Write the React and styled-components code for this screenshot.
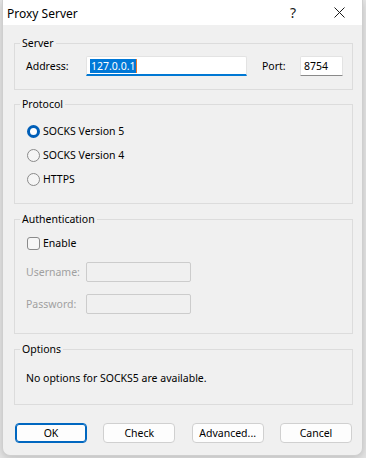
import React from 'react';
import styled, { createGlobalStyle } from 'styled-components';

const GlobalStyle = createGlobalStyle`
  html, body {
    margin: 0;
    padding: 0;
    background: #e6e6e6;
  }
  body {
    font-family: "Segoe UI", "Noto Sans", "Liberation Sans", sans-serif;
    font-size: 10.5px;
    color: #000;
  }
`;

const Page = styled.div`
  width: 366px;
  height: 458px;
  overflow: hidden;
  padding-left: 2px;
  box-sizing: border-box;
`;

const Window = styled.div`
  width: 361px;
  height: 456px;
  box-sizing: border-box;
  background: #f0f0f0;
  border: 1px solid #cfcfcf;
  border-top: none;
  border-radius: 0 0 8px 8px;
  box-shadow: 0 2px 8px rgba(0, 0, 0, 0.18);
  display: flex;
  flex-direction: column;
  overflow: hidden;
`;

const TitleBar = styled.div`
  height: 25px;
  background: #fff;
  display: flex;
  align-items: center;
  padding-left: 4px;
  flex-shrink: 0;
`;

const Title = styled.div`
  flex: 1;
  font-size: 12px;
  padding-top: 1px;
`;

const TitleButton = styled.div`
  width: 46px;
  height: 25px;
  display: flex;
  align-items: center;
  justify-content: center;
  font-size: 14px;
  color: #1a1a1a;
`;

const Body = styled.div`
  flex: 1;
  display: flex;
  flex-direction: column;
  padding: 18px 9px 0 11px;
`;

const Group = styled.div`
  position: relative;
  height: ${({ $h }) => $h}px;
  box-sizing: border-box;
  margin-bottom: ${({ $gap }) => $gap}px;
  border: 1px solid #dcdcdc;
  padding: ${({ $pt }) => $pt}px 9px 0 11px;
  display: flex;
  flex-direction: column;
  flex-shrink: 0;
`;

const Legend = styled.div`
  position: absolute;
  top: -8px;
  left: 5px;
  font-size: 10.5px;
  line-height: 14px;
  padding: 0 2px;
  background: #f0f0f0;
`;

const Row = styled.div`
  display: flex;
  align-items: center;
  height: ${({ $h }) => $h || 20}px;
  margin-top: ${({ $mt }) => $mt || 0}px;
  flex-shrink: 0;
`;

const Label = styled.span`
  width: ${({ $w }) => ($w ? `${$w}px` : 'auto')};
  margin-left: ${({ $ml }) => $ml || 0}px;
  color: ${({ $disabled }) => ($disabled ? '#a0a0a0' : '#000')};
  flex-shrink: 0;
`;

const TextBox = styled.div`
  width: ${({ $w }) => $w}px;
  height: 20px;
  box-sizing: border-box;
  background: ${({ $disabled }) => ($disabled ? '#f0f0f0' : '#fff')};
  border: 1px solid ${({ $disabled }) => ($disabled ? '#cccccc' : '#e3e3e3')};
  border-bottom: ${({ $focused, $disabled }) =>
    $focused ? '2px solid #0078d4' : $disabled ? '1px solid #cccccc' : '1px solid #8a8a8a'};
  border-radius: ${({ $disabled }) => ($disabled ? '2px' : '2px 2px 0 0')};
  display: flex;
  align-items: center;
  padding-left: 3px;
  line-height: 14px;
  flex-shrink: 0;
`;

const Selected = styled.span`
  background: #0078d7;
  color: #fff;
  padding: 0 1px;
  border-right: 1px solid #e8782a;
`;

const RadioDot = styled.span`
  width: 13px;
  height: 13px;
  box-sizing: border-box;
  border-radius: 50%;
  border: ${({ $checked }) => ($checked ? '3.5px solid #005fb8' : '1px solid #8a8a8a')};
  background: ${({ $checked }) => ($checked ? '#fff' : '#f5f5f5')};
  margin: 0 3px 0 1px;
  flex-shrink: 0;
`;

const CheckBox = styled.span`
  width: 13px;
  height: 13px;
  box-sizing: border-box;
  border: 1px solid #8a8a8a;
  border-radius: 3px;
  background: #f6f6f6;
  margin: 0 3px 0 1px;
  flex-shrink: 0;
`;

const Note = styled.div`
  line-height: 16px;
`;

const ButtonBar = styled.div`
  display: flex;
  justify-content: space-between;
  padding: 0 1px;
`;

const Button = styled.div`
  width: 72px;
  height: 20px;
  box-sizing: border-box;
  background: #fdfdfd;
  border: 1px solid ${({ $default }) => ($default ? '#0067c0' : '#d0d0d0')};
  box-shadow: ${({ $default }) => ($default ? 'inset 0 0 0 1px #0067c0' : 'none')};
  border-radius: 4px;
  display: flex;
  align-items: center;
  justify-content: center;
`;

const CloseIcon = () => (
  <svg width="11" height="11" viewBox="0 0 11 11">
    <path d="M0.5 0.5 L10.5 10.5 M10.5 0.5 L0.5 10.5" stroke="#1a1a1a" strokeWidth="1" fill="none" />
  </svg>
);

const Radio = ({ checked, children }) => (
  <Row $h={24}>
    <RadioDot $checked={checked} />
    <Label>{children}</Label>
  </Row>
);

export default function App() {
  return (
    <>
      <GlobalStyle />
      <Page>
        <Window>
          <TitleBar>
            <Title>Proxy Server</Title>
            <TitleButton>?</TitleButton>
            <TitleButton>
              <CloseIcon />
            </TitleButton>
          </TitleBar>
          <Body>
            <Group $h={47} $pt={12} $gap={14}>
              <Legend>Server</Legend>
              <Row>
                <Label $w={60}>Address:</Label>
                <TextBox $w={161} $focused>
                  <Selected>127.0.0.1</Selected>
                </TextBox>
                <Label $ml={15} $w={38}>Port:</Label>
                <TextBox $w={43}>8754</TextBox>
              </Row>
            </Group>

            <Group $h={100} $pt={14} $gap={15}>
              <Legend>Protocol</Legend>
              <Radio checked>SOCKS Version 5</Radio>
              <Radio>SOCKS Version 4</Radio>
              <Radio>HTTPS</Radio>
            </Group>

            <Group $h={115} $pt={13} $gap={15}>
              <Legend>Authentication</Legend>
              <Row>
                <CheckBox />
                <Label>Enable</Label>
              </Row>
              <Row $mt={9}>
                <Label $w={60} $disabled>Username:</Label>
                <TextBox $w={105} $disabled />
              </Row>
              <Row $mt={12}>
                <Label $w={60} $disabled>Password:</Label>
                <TextBox $w={105} $disabled />
              </Row>
            </Group>

            <Group $h={56} $pt={20} $gap={18}>
              <Legend>Options</Legend>
              <Note>No options for SOCKS5 are available.</Note>
            </Group>

            <ButtonBar>
              <Button $default>OK</Button>
              <Button>Check</Button>
              <Button>Advanced...</Button>
              <Button>Cancel</Button>
            </ButtonBar>
          </Body>
        </Window>
      </Page>
    </>
  );
}
